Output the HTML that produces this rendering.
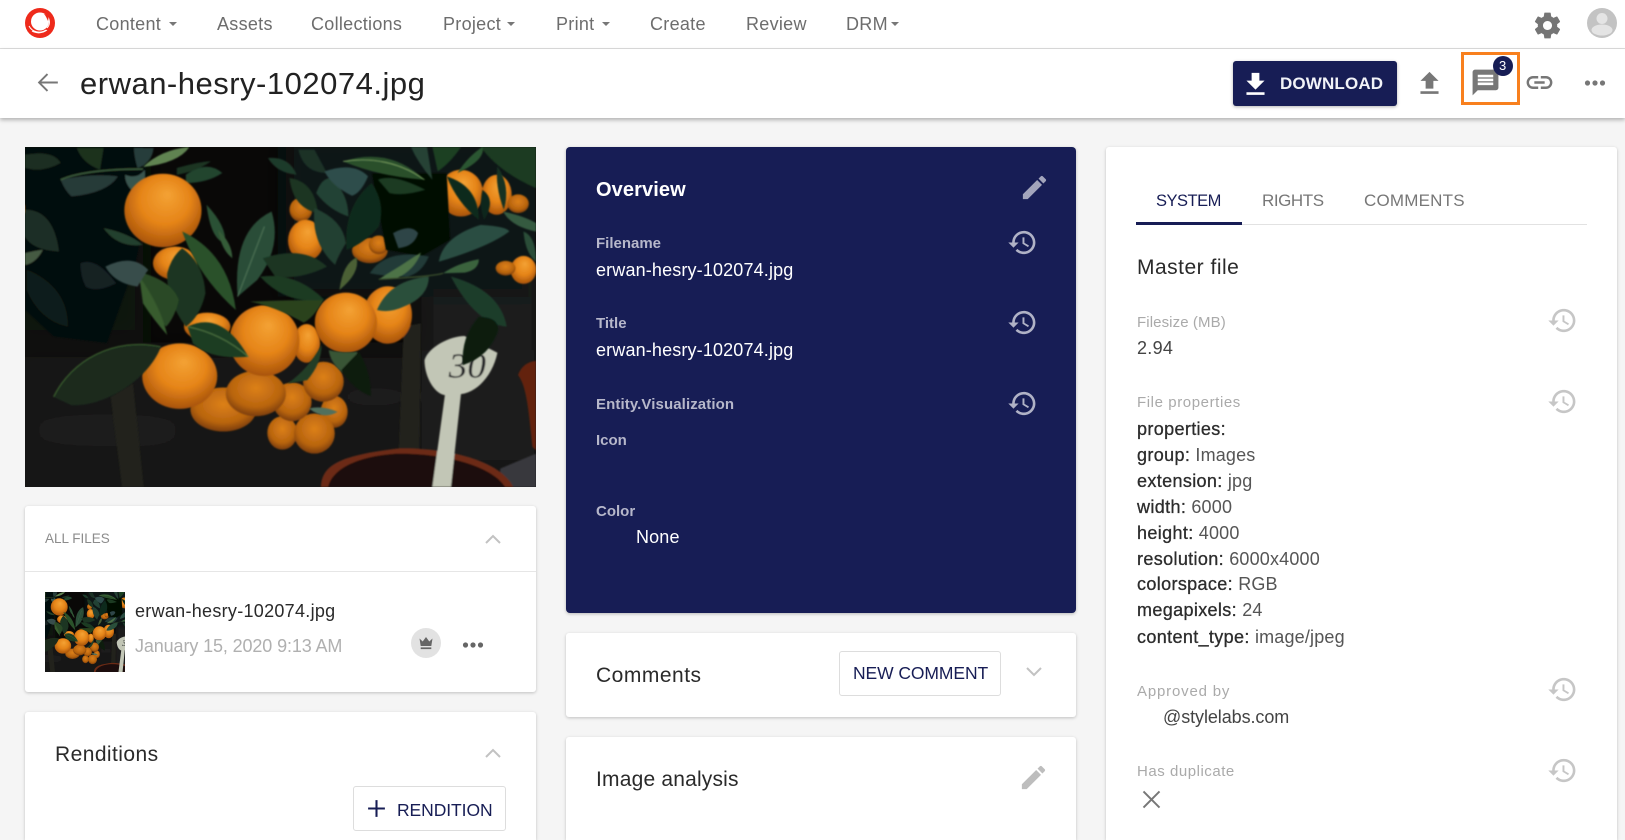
<!DOCTYPE html>
<html lang="en">
<head>
<meta charset="utf-8">
<title>erwan-hesry-102074.jpg</title>
<style>
html,body{margin:0;padding:0;width:1625px;height:840px;overflow:hidden;background:#f5f5f5;font-family:"Liberation Sans",Arial,sans-serif;color:#333}
#page{position:relative;width:1625px;height:840px;overflow:hidden;background:#f5f5f5}
.box{position:absolute;box-sizing:border-box}
.card{background:#fff;border-radius:3px;box-shadow:0 1px 3px rgba(0,0,0,.22)}
.open{border-radius:3px 3px 0 0}
.t{position:absolute;white-space:nowrap;line-height:24px;letter-spacing:.016em}
.ic{position:absolute;width:31px;height:31px;display:block}
.nav{font-size:18px;color:#6d6d6d;top:12px}
.car{position:absolute;top:22px;width:0;height:0;border-left:4.5px solid transparent;border-right:4.5px solid transparent;border-top:4.5px solid #777}
.lab{font-size:15px;font-weight:700;color:#b6b7ca;left:596px}
.val{font-size:18px;color:#fff;left:596px;letter-spacing:.15px}
.glab{font-size:15px;color:#aaa;left:1137px;letter-spacing:.03em}
.kv{left:1137px;font-size:18px;color:#555;letter-spacing:.01em}
.kv b{font-weight:400;color:#2c2c2c;-webkit-text-stroke:.3px #2c2c2c;letter-spacing:.02em}
.h1{font-size:21px;color:#2a2a2a;letter-spacing:.5px}
.btn{background:#fff;border:1px solid #ddd;border-radius:3px}
.navy{color:#171d55}
</style>
</head>
<body>
<div id="page">

<!-- top nav -->
<div class="box" style="left:0;top:0;width:1625px;height:49px;background:#fff;border-bottom:1px solid #dedede"></div>
<svg class="ic" style="left:24px;top:7px;width:32px;height:32px" viewBox="0 0 32 32">
  <circle cx="16" cy="16" r="15" fill="#ee2a1b"/>
  <circle cx="16" cy="14.500" r="9" fill="#fff"/>
  <path d="M5 19c3 6 11 8 17 4M8 24c5 3 11 2 15-1M24 10c2 4 2 8-1 11M21 18c-1 2-3 3-5 3" fill="none" stroke="#fff" stroke-width="1"/>
  <path d="M20 7l5 1-1 6c-1-2-2-5-4-7z" fill="#ee2a1b"/>
</svg>

<span class="t nav" style="left:96px">Content</span><i class="car" style="left:169px"></i>
<span class="t nav" style="left:217px">Assets</span>
<span class="t nav" style="left:311px">Collections</span>
<span class="t nav" style="left:443px">Project</span><i class="car" style="left:507px"></i>
<span class="t nav" style="left:556px">Print</span><i class="car" style="left:602px"></i>
<span class="t nav" style="left:650px">Create</span>
<span class="t nav" style="left:746px">Review</span>
<span class="t nav" style="left:846px">DRM</span><i class="car" style="left:891px"></i>

<svg class="ic" style="left:1532px;top:10px" viewBox="0 0 24 24" fill="#757575"><path d="M19.43 12.98c.04-.32.07-.64.07-.98s-.03-.66-.07-.98l2.11-1.65c.19-.15.24-.42.12-.64l-2-3.46c-.12-.22-.39-.3-.61-.22l-2.49 1c-.52-.4-1.08-.73-1.69-.98l-.38-2.65C14.46 2.18 14.25 2 14 2h-4c-.25 0-.46.18-.49.42l-.38 2.65c-.61.25-1.17.59-1.69.98l-2.49-1c-.23-.09-.49 0-.61.22l-2 3.46c-.13.22-.07.49.12.64l2.11 1.65c-.04.32-.07.65-.07.98s.03.66.07.98l-2.11 1.65c-.19.15-.24.42-.12.64l2 3.46c.12.22.39.3.61.22l2.49-1c.52.4 1.08.73 1.69.98l.38 2.65c.03.24.24.42.49.42h4c.25 0 .46-.18.49-.42l.38-2.65c.61-.25 1.17-.59 1.69-.98l2.49 1c.23.09.49 0 .61-.22l2-3.46c.12-.22.07-.49-.12-.64l-2.11-1.65zM12 15.5c-1.93 0-3.5-1.57-3.5-3.5s1.57-3.5 3.5-3.5 3.5 1.57 3.5 3.5-1.57 3.5-3.5 3.5z"/></svg>
<svg class="ic" style="left:1587px;top:8px;width:30px;height:30px" viewBox="0 0 30 30">
  <defs><clipPath id="av"><circle cx="15" cy="15" r="15"/></clipPath></defs>
  <circle cx="15" cy="15" r="15" fill="#c3c3c3"/>
  <g clip-path="url(#av)" fill="#e4e4e4"><circle cx="15" cy="10.500" r="5.500"/><ellipse cx="15" cy="22" rx="10.500" ry="5.500"/></g>
</svg>

<!-- sub header -->
<div class="box" style="left:0;top:49px;width:1625px;height:69px;background:#fff;box-shadow:0 2px 4px rgba(0,0,0,.28)"></div>
<svg class="ic" style="left:32px;top:67px" viewBox="0 0 24 24"><path d="M20 12H5.500M12 5.500L5.500 12l6.500 6.500" fill="none" stroke="#777" stroke-width="1.500"/></svg>
<span class="t" style="left:80px;top:66px;font-size:31px;line-height:36px;color:#222;letter-spacing:.5px">erwan-hesry-102074.jpg</span>

<div class="box" style="left:1233px;top:61px;width:164px;height:45px;background:#171d55;border-radius:3px;box-shadow:0 1px 3px rgba(0,0,0,.3)"></div>
<svg class="ic" style="left:1240px;top:69px" viewBox="0 0 24 24" fill="#fff"><path d="M19 9h-4V3H9v6H5l7 7 7-7zM5 18v2h14v-2H5z"/></svg>
<span class="t" style="left:1280px;top:72px;font-size:17px;font-weight:700;color:#f1f2f8;letter-spacing:.15px">DOWNLOAD</span>

<svg class="ic" style="left:1414px;top:68px" viewBox="0 0 24 24" fill="#777"><path d="M9 16h6v-6h4l-7-7-7 7h4zm-4 2h14v2H5z"/></svg>

<div class="box" style="left:1461px;top:52px;width:59px;height:53px;border:3px solid #f8801e"></div>
<svg class="ic" style="left:1470px;top:67px" viewBox="0 0 24 24" fill="#777"><path d="M20 2H4c-1.1 0-2 .9-2 2v18l4-4h14c1.1 0 2-.9 2-2V4c0-1.1-.9-2-2-2zm-2 12H6v-2h12v2zm0-3H6V9h12v2zm0-3H6V6h12v2z"/></svg>
<div class="box" style="left:1493px;top:56px;width:20px;height:20px;border-radius:50%;background:#171d55"></div>
<span class="t" style="left:1499px;top:54px;font-size:13px;color:#fff">3</span>

<svg class="ic" style="left:1524px;top:67px" viewBox="0 0 24 24" fill="#777"><path d="M3.9 12c0-1.71 1.39-3.1 3.1-3.1h4V7H7c-2.76 0-5 2.24-5 5s2.24 5 5 5h4v-1.9H7c-1.71 0-3.1-1.39-3.1-3.1zM8 13h8v-2H8v2zm9-6h-4v1.9h4c1.71 0 3.1 1.39 3.1 3.1s-1.39 3.1-3.1 3.1h-4V17h4c2.76 0 5-2.24 5-5s-2.24-5-5-5z"/></svg>
<svg class="ic" style="left:1584px;top:78px;width:22px;height:10px" viewBox="0 0 22 10" fill="#777"><circle cx="3.5" cy="5" r="2.6"/><circle cx="11" cy="5" r="2.6"/><circle cx="18.5" cy="5" r="2.6"/></svg>

<!-- main photo -->
<svg class="box" style="left:25px;top:147px;width:511px;height:340px;display:block" viewBox="70 52 1430 1018" preserveAspectRatio="none">
<defs>
  <radialGradient id="o" cx=".5" cy=".42" r=".6" fx=".56" fy=".28">
    <stop offset="0" stop-color="#f4a234"/><stop offset=".55" stop-color="#e58418"/><stop offset="1" stop-color="#a4500a"/>
  </radialGradient>
  <radialGradient id="od" cx=".5" cy=".38" r=".65">
    <stop offset="0" stop-color="#dc8018"/><stop offset=".65" stop-color="#b8640f"/><stop offset="1" stop-color="#723708"/>
  </radialGradient>
  <filter id="bl" x="-2%" y="-2%" width="104%" height="104%"><feGaussianBlur stdDeviation="2"/></filter>
  <filter id="lv" x="-2%" y="-2%" width="104%" height="104%">
    <feGaussianBlur stdDeviation="2"/>
    <feComponentTransfer><feFuncR type="linear" slope=".6"/><feFuncG type="linear" slope=".66"/><feFuncB type="linear" slope=".62"/></feComponentTransfer>
  </filter>
  <filter id="bl2" x="-20%" y="-20%" width="140%" height="140%"><feGaussianBlur stdDeviation="34"/></filter>
  <clipPath id="cp"><rect x="70" y="52" width="1430" height="1018"/></clipPath>
</defs>
<g id="photo" clip-path="url(#cp)">
<rect x="70" y="52" width="1430" height="1018" fill="#090807"/>
<g filter="url(#bl2)">
  <rect x="40" y="660" width="1490" height="440" fill="#151314"/>
  <rect x="1180" y="470" width="340" height="520" fill="#1c1a1c"/>
  <ellipse cx="300" cy="900" rx="220" ry="26" fill="#222020"/>
  <ellipse cx="560" cy="1010" rx="190" ry="22" fill="#1f1d1e"/>
  <ellipse cx="1050" cy="800" rx="120" ry="30" fill="#1f1c1d"/>
  <rect x="1360" y="410" width="170" height="50" fill="#5c4440"/>
  <rect x="40" y="60" width="360" height="560" fill="#0e1611"/>
  <rect x="800" y="30" width="720" height="470" fill="#0d1812"/>
</g>
<g filter="url(#bl)">
  <path d="M1400 1015L1500 970V1070H1400Z" fill="#38383d"/>
  <path d="M310 800L372 760 402 1070H342Z" fill="#22241a"/>
  <path d="M1130 590L1178 580 1172 1070H1112Z" fill="#22211a"/>
  <path d="M1450 735C1460 705 1480 695 1500 692V960L1490 950C1480 850 1475 770 1450 735Z" fill="#64220f"/>
  <path d="M898 1070C900 1000 960 975 1110 955 1250 950 1400 990 1436 1070Z" fill="#6c2b14"/>
  <path d="M918 1070C930 1015 1000 978 1110 970 1240 968 1375 1005 1414 1070Z" fill="#1a0e0b"/>
  <path d="M1210 1070L1245 795C1215 790 1188 740 1188 690 1200 650 1260 618 1300 618L1392 668C1380 730 1340 785 1290 792L1262 1070Z" fill="#c2c6b6"/>
  <text x="1256" y="742" font-family="Liberation Serif,serif" font-style="italic" font-size="104" fill="#222426">30</text>

  <!-- back fruit -->
  <ellipse cx="95" cy="238" rx="30" ry="20" fill="url(#od)"/>
  <ellipse cx="268" cy="330" rx="16" ry="12" fill="url(#od)"/>
  <ellipse cx="842" cy="240" rx="32" ry="36" fill="url(#od)"/>
  <ellipse cx="856" cy="332" rx="50" ry="62" fill="url(#o)"/>
  <ellipse cx="1035" cy="362" rx="50" ry="38" fill="url(#od)"/>
  <ellipse cx="1060" cy="345" rx="28" ry="28" fill="url(#od)"/>
  <ellipse cx="1290" cy="190" rx="62" ry="70" fill="url(#o)"/>
  <ellipse cx="1390" cy="195" rx="42" ry="60" fill="url(#o)"/>
  <ellipse cx="1450" cy="222" rx="30" ry="28" fill="url(#od)"/>
  <ellipse cx="1465" cy="420" rx="36" ry="42" fill="url(#o)"/>
  <ellipse cx="1415" cy="415" rx="28" ry="22" fill="url(#od)"/>
  <ellipse cx="490" cy="400" rx="62" ry="50" fill="url(#o)"/>
  <ellipse cx="580" cy="590" rx="65" ry="42" fill="url(#o)"/>
  <ellipse cx="625" cy="838" rx="92" ry="66" fill="url(#od)"/>
  <ellipse cx="790" cy="908" rx="42" ry="50" fill="url(#od)"/>
  <ellipse cx="935" cy="845" rx="38" ry="48" fill="url(#od)"/>
  <ellipse cx="880" cy="910" rx="57" ry="60" fill="url(#od)"/>
  <ellipse cx="818" cy="815" rx="54" ry="58" fill="url(#od)"/>
  <ellipse cx="905" cy="755" rx="57" ry="60" fill="url(#od)"/>
  <ellipse cx="858" cy="640" rx="38" ry="58" fill="url(#o)"/>
  <ellipse cx="1085" cy="555" rx="68" ry="86" fill="url(#o)"/>
</g>

<g filter="url(#lv)">
  <!-- back dark foliage -->
  <path d="M70 52H400L420 200 380 400 300 640 150 620 70 540Z" fill="#0f1712"/>
  <path d="M1040 130L1250 130 1260 330 1180 380 1080 360Z" fill="#0c1710"/>
  <path d="M70 240Q150 240 165 365Q90 360 70 320Z" fill="#2a3e36"/>
  <path d="M170 150Q260 130 330 140Q300 190 200 200Q180 180 170 150Z" fill="#36494a"/>
  <path d="M75 420Q190 470 190 590Q110 570 75 480Z" fill="#1e2a28"/>
  <path d="M290 295Q360 310 400 345Q330 355 290 295Z" fill="#32503c"/>
  <path d="M225 400Q270 380 325 460Q270 490 240 470Q225 440 225 400Z" fill="#222f33"/>
  <path d="M70 370Q110 360 120 360Q100 400 70 405Z" fill="#5a6e56"/>
  <path d="M70 75Q150 60 170 100Q120 130 70 115Z" fill="#253a2e"/>
  <path d="M375 55H430Q425 100 385 115Q375 80 375 55Z" fill="#364e4e"/>
  <path d="M215 55H290L280 120Q230 100 215 55Z" fill="#28402c"/>
  <path d="M170 150Q240 118 400 118" fill="none" stroke="#4c6c4c" stroke-width="5"/>
  <path d="M350 135Q385 150 405 120Q410 175 380 190Q350 170 350 135Z" fill="#4b6864"/>
  <path d="M520 135Q580 90 622 130Q580 160 520 160Z" fill="#2f543e"/>
  <path d="M495 115Q560 95 590 95Q550 125 495 135Z" fill="#264532"/>
  <path d="M810 145Q880 155 890 250Q820 235 810 145Z" fill="#25422f"/>
  <path d="M750 85Q810 80 830 135Q775 130 750 85Z" fill="#2c4839"/>
  <path d="M835 60H880Q905 110 915 130Q850 130 835 60Z" fill="#253f36"/>
</g>

<g filter="url(#bl)">
  <!-- main fruit -->
  <ellipse cx="456" cy="242" rx="108" ry="110" fill="url(#o)"/>
  <ellipse cx="716" cy="790" rx="84" ry="68" fill="url(#od)"/>
  <ellipse cx="503" cy="738" rx="105" ry="98" fill="url(#o)"/>
  <ellipse cx="740" cy="632" rx="98" ry="106" fill="url(#o)"/>
  <ellipse cx="968" cy="578" rx="87" ry="90" fill="url(#o)"/>
</g>

<g filter="url(#lv)">
  <!-- leaves -->
  <path d="M150 800C200 690 320 620 450 650 420 740 300 830 200 825Z" fill="#263829"/>
  <path d="M150 800C200 690 320 620 450 650" fill="none" stroke="#50763e" stroke-width="3"/>
  <path d="M400 112Q450 60 530 52Q500 100 400 112Z" fill="#7a9f68"/>
  <path d="M510 355Q570 400 575 490 560 560 520 590 465 510 468 430 480 380 510 355Z" fill="#26442e"/>
  <path d="M385 425Q480 450 500 510 490 560 465 590 400 520 385 425Z" fill="#3a5c36"/>
  <path d="M390 440Q450 530 468 615 430 570 400 520Z" fill="#4a703e"/>
  <path d="M510 305Q640 370 660 540 555 440 510 305Z" fill="#386438"/>
  <path d="M578 225Q635 290 630 340 590 330 578 225Z" fill="#3a6444"/>
  <path d="M610 300Q650 340 650 385 620 360 610 300Z" fill="#46704a"/>
  <path d="M665 500Q650 300 760 245 790 350 720 450Z" fill="#386048"/>
  <path d="M665 500L740 290" stroke="#64886c" stroke-width="3" fill="none"/>
  <path d="M295 410Q370 370 415 420 400 440 385 470 320 460 295 410Z" fill="#4b5f60"/>
  <path d="M525 590Q620 540 695 680 590 690 540 640Z" fill="#294e30"/>
  <path d="M525 590Q620 610 695 680" stroke="#669054" stroke-width="3" fill="none"/>
  <path d="M735 385Q850 345 915 410 840 450 770 440Z" fill="#274532"/>
  <path d="M728 440Q830 425 908 510 800 525 728 440Z" fill="#264831"/>
  <path d="M700 515Q800 510 905 510 880 560 850 578 770 530 700 515Z" fill="#39522c"/>
  <path d="M880 235Q960 270 968 340 945 380 938 405 870 340 880 235Z" fill="#30503f"/>
  <path d="M885 190Q900 145 925 145 975 190 975 260 920 240 885 190Z" fill="#325344"/>
  <path d="M970 360Q960 230 1040 160 1080 220 1060 290 1020 340 970 360Z" fill="#1e3826"/>
  <path d="M960 95Q1090 50 1188 150 1060 140 960 95Z" fill="#38623a"/>
  <path d="M960 95Q1090 75 1188 150" stroke="#a0c87c" stroke-width="2" fill="none"/>
  <path d="M908 125Q990 95 1030 140 1010 190 985 198 930 170 908 125Z" fill="#3e5f60"/>
  <path d="M1058 150Q1100 130 1190 180 1130 200 1090 190Z" fill="#284c32"/>
  <path d="M1100 310Q1150 280 1170 310 1160 350 1115 355Z" fill="#3e555c"/>
  <path d="M1035 430Q1080 355 1200 380 1180 430 1140 440 1080 440 1035 430Z" fill="#2e4c4a"/>
  <path d="M1060 448Q1120 410 1178 368 1160 420 1110 445Z" fill="#658c5c"/>
  <path d="M1055 540Q1090 450 1200 440 1200 500 1130 530 1090 550 1055 540Z" fill="#3a624e"/>
  <path d="M950 480Q960 400 998 383 1008 430 950 480Z" fill="#607646"/>
  <path d="M920 660Q960 670 1000 665 990 720 960 728 925 700 920 660Z" fill="#4c6846"/>
  <path d="M955 720Q990 680 1005 665 1040 730 1038 798 990 780 955 720Z" fill="#182618"/>
  <path d="M805 760Q860 720 900 645 900 700 860 750Z" fill="#304e34"/>
  <path d="M865 835Q900 825 945 845 905 870 865 835Z" fill="#688876"/>
  <path d="M1240 430Q1280 400 1340 388 1340 420 1300 428Z" fill="#4d7950"/>
  <path d="M1262 440Q1400 480 1418 590 1330 580 1262 440Z" fill="#294d3a"/>
  <path d="M1228 395Q1240 320 1345 285 1420 290 1425 305 1370 350 1230 395Z" fill="#386054"/>
  <path d="M1408 245Q1470 260 1500 280V305Q1430 290 1408 245Z" fill="#466e52"/>
  <path d="M1345 52H1500V175Q1400 130 1345 52Z" fill="#264c2e"/>
  <path d="M1280 130Q1310 80 1350 52 1360 90 1280 130Z" fill="#3b6a40"/>
  <path d="M1150 52H1195L1210 150Q1170 100 1150 52Z" fill="#345246"/>
  <path d="M1210 52H1290Q1260 100 1225 125Z" fill="#285030"/>
  <path d="M1250 140Q1340 170 1340 270 1280 220 1250 140Z" fill="#1c3828"/>
  <path d="M1350 180Q1390 210 1355 270 1340 230 1350 180Z" fill="#1c3226"/>
  <path d="M1392 110Q1430 170 1410 240 1385 170 1392 110Z" fill="#204030"/>
  <path d="M1465 305Q1500 320 1500 395 1470 370 1465 305Z" fill="#386048"/>
  <path d="M1295 705Q1290 620 1340 560 1395 560 1395 600 1370 680 1295 705Z" fill="#14291e"/>
  <path d="M1060 448Q1210 440 1240 430" stroke="#4c603a" stroke-width="4" fill="none"/>
</g>
</g>
</svg>

<!-- all files -->
<div class="box card" style="left:25px;top:506px;width:511px;height:186px"></div>
<div class="box" style="left:25px;top:571px;width:511px;height:1px;background:#e6e6e6"></div>
<span class="t" style="left:45px;top:527px;font-size:13.500px;color:#8c8c8c;letter-spacing:0">ALL FILES</span>
<svg class="ic" style="left:484px;top:533px;width:18px;height:12px" viewBox="0 0 18 12"><path d="M2 10L9 3l7 7" fill="none" stroke="#c2c2c2" stroke-width="2"/></svg>
<svg class="box" style="left:45px;top:592px;width:80px;height:80px;display:block" viewBox="275 52 1018 1018"><use href="#photo"/></svg>
<span class="t" style="left:135px;top:599px;font-size:18px;color:#2a2a2a">erwan-hesry-102074.jpg</span>
<span class="t" style="left:135px;top:634px;font-size:18px;color:#b0b0b0;letter-spacing:-.12px">January 15, 2020 9:13 AM</span>
<div class="box" style="left:411px;top:628px;width:30px;height:30px;border-radius:50%;background:#e2e2e2"></div>
<svg class="ic" style="left:418px;top:635px;width:16px;height:16px" viewBox="0 0 16 16" fill="#666"><path d="M1.5 3.500l3.200 3L8 2l3.300 4.500 3.200-3-1.200 7.500H2.700z"/><rect x="2.700" y="12.400" width="10.600" height="1.700"/></svg>
<svg class="ic" style="left:462px;top:640px;width:22px;height:10px" viewBox="0 0 22 10" fill="#666"><circle cx="3.500" cy="5" r="2.600"/><circle cx="11" cy="5" r="2.600"/><circle cx="18.500" cy="5" r="2.600"/></svg>

<!-- renditions -->
<div class="box card open" style="left:25px;top:712px;width:511px;height:128px"></div>
<span class="t h1" style="left:55px;top:743px;letter-spacing:.43px">Renditions</span>
<svg class="ic" style="left:484px;top:747px;width:18px;height:12px" viewBox="0 0 18 12"><path d="M2 10L9 3l7 7" fill="none" stroke="#c2c2c2" stroke-width="2"/></svg>
<div class="box btn" style="left:353px;top:786px;width:153px;height:45px"></div>
<svg class="ic" style="left:361px;top:793px" viewBox="0 0 24 24" fill="#171d55"><path d="M18.500 12.800h-5.700v5.700h-1.600v-5.700H5.500v-1.600h5.700V5.500h1.600v5.700h5.700z"/></svg>
<span class="t navy" style="left:397px;top:798px;font-size:17.500px;letter-spacing:-.08px">RENDITION</span>

<!-- overview -->
<div class="box" style="left:566px;top:147px;width:510px;height:466px;background:#171d55;border-radius:4px;box-shadow:0 1px 3px rgba(0,0,0,.25)"></div>
<span class="t" style="left:596px;top:178px;font-size:20px;font-weight:700;color:#fff;letter-spacing:.1px">Overview</span>
<svg class="ic" style="left:1019px;top:172px" viewBox="0 0 24 24" fill="#a3a5bc"><path d="M3 17.250V21h3.750L17.810 9.940l-3.750-3.750L3 17.250zM20.710 7.040c.39-.39.39-1.020 0-1.410l-2.340-2.340c-.39-.39-1.020-.39-1.410 0l-1.830 1.830 3.750 3.750 1.830-1.830z"/></svg>

<span class="t lab" style="top:232px;letter-spacing:0">Filename</span>
<span class="t val" style="top:258px">erwan-hesry-102074.jpg</span>
<svg class="ic" style="left:1007px;top:227px" viewBox="0 0 24 24" fill="#b0b2c6"><path d="M13 3c-4.970 0-9 4.030-9 9H1l3.890 3.890.07.140L9 12H6c0-3.870 3.130-7 7-7s7 3.130 7 7-3.130 7-7 7c-1.930 0-3.680-.79-4.940-2.060l-1.420 1.420C8.270 19.990 10.510 21 13 21c4.970 0 9-4.030 9-9s-4.030-9-9-9zm-1 5v5l4.280 2.540.72-1.210-3.500-2.080V8H12z"/></svg>

<span class="t lab" style="top:312px;letter-spacing:0">Title</span>
<span class="t val" style="top:338px">erwan-hesry-102074.jpg</span>
<svg class="ic" style="left:1007px;top:307px" viewBox="0 0 24 24" fill="#b0b2c6"><path d="M13 3c-4.970 0-9 4.030-9 9H1l3.890 3.890.07.140L9 12H6c0-3.870 3.130-7 7-7s7 3.130 7 7-3.130 7-7 7c-1.930 0-3.680-.79-4.940-2.060l-1.420 1.420C8.270 19.990 10.510 21 13 21c4.970 0 9-4.030 9-9s-4.030-9-9-9zm-1 5v5l4.280 2.540.72-1.210-3.500-2.080V8H12z"/></svg>

<span class="t lab" style="top:393px;letter-spacing:.1px">Entity.Visualization</span>
<svg class="ic" style="left:1007px;top:388px" viewBox="0 0 24 24" fill="#b0b2c6"><path d="M13 3c-4.970 0-9 4.030-9 9H1l3.890 3.890.07.140L9 12H6c0-3.870 3.130-7 7-7s7 3.130 7 7-3.130 7-7 7c-1.930 0-3.680-.79-4.940-2.060l-1.420 1.420C8.270 19.990 10.510 21 13 21c4.970 0 9-4.030 9-9s-4.030-9-9-9zm-1 5v5l4.280 2.540.72-1.210-3.500-2.080V8H12z"/></svg>

<span class="t lab" style="top:429px;letter-spacing:0">Icon</span>
<span class="t lab" style="top:500px;letter-spacing:0">Color</span>
<span class="t val" style="left:636px;top:525px">None</span>

<!-- comments -->
<div class="box card" style="left:566px;top:633px;width:510px;height:84px"></div>
<span class="t h1" style="left:596px;top:664px">Comments</span>
<div class="box btn" style="left:839px;top:651px;width:162px;height:45px"></div>
<span class="t navy" style="left:853px;top:661px;font-size:17.500px;letter-spacing:-.09px">NEW COMMENT</span>
<svg class="ic" style="left:1025px;top:666px;width:18px;height:12px" viewBox="0 0 18 12"><path d="M2 2l7 7 7-7" fill="none" stroke="#c2c2c2" stroke-width="2"/></svg>

<!-- image analysis -->
<div class="box card open" style="left:566px;top:737px;width:510px;height:103px"></div>
<span class="t h1" style="left:596px;top:768px;letter-spacing:.19px">Image analysis</span>
<svg class="ic" style="left:1018px;top:762px" viewBox="0 0 24 24" fill="#bdbdbd"><path d="M3 17.250V21h3.750L17.810 9.940l-3.750-3.750L3 17.250zM20.710 7.040c.39-.39.39-1.020 0-1.410l-2.340-2.340c-.39-.39-1.020-.39-1.410 0l-1.830 1.830 3.750 3.750 1.830-1.830z"/></svg>

<!-- right panel -->
<div class="box card open" style="left:1106px;top:147px;width:511px;height:693px"></div>
<span class="t navy" style="left:1156px;top:189px;font-size:16.500px;letter-spacing:-.5px">SYSTEM</span>
<span class="t" style="left:1262px;top:189px;font-size:17px;color:#777;letter-spacing:-.43px">RIGHTS</span>
<span class="t" style="left:1364px;top:189px;font-size:17px;color:#777;letter-spacing:.2px">COMMENTS</span>
<div class="box" style="left:1136px;top:224px;width:451px;height:1px;background:#e2e2e2"></div>
<div class="box" style="left:1136px;top:222px;width:106px;height:3px;background:#171d55"></div>

<span class="t h1" style="left:1137px;top:256px">Master file</span>

<span class="t glab" style="top:311px;letter-spacing:.1px">Filesize (MB)</span>
<span class="t" style="left:1137px;top:336px;font-size:18px;color:#444">2.94</span>
<svg class="ic" style="left:1547px;top:305px" viewBox="0 0 24 24" fill="#c6c6c6"><path d="M13 3c-4.970 0-9 4.030-9 9H1l3.890 3.890.07.140L9 12H6c0-3.870 3.130-7 7-7s7 3.130 7 7-3.130 7-7 7c-1.930 0-3.680-.79-4.940-2.060l-1.420 1.420C8.270 19.990 10.510 21 13 21c4.970 0 9-4.030 9-9s-4.030-9-9-9zm-1 5v5l4.280 2.540.72-1.210-3.500-2.080V8H12z"/></svg>

<span class="t glab" style="top:391px;letter-spacing:.59px">File properties</span>
<svg class="ic" style="left:1547px;top:386px" viewBox="0 0 24 24" fill="#c6c6c6"><path d="M13 3c-4.970 0-9 4.030-9 9H1l3.890 3.890.07.140L9 12H6c0-3.870 3.130-7 7-7s7 3.130 7 7-3.130 7-7 7c-1.930 0-3.680-.79-4.940-2.060l-1.420 1.420C8.270 19.990 10.510 21 13 21c4.970 0 9-4.030 9-9s-4.030-9-9-9zm-1 5v5l4.280 2.540.72-1.210-3.500-2.080V8H12z"/></svg>

<span class="t kv" style="top:417px"><b>properties:</b></span>
<span class="t kv" style="top:443px"><b>group:</b> Images</span>
<span class="t kv" style="top:469px"><b>extension:</b> jpg</span>
<span class="t kv" style="top:495px"><b>width:</b> 6000</span>
<span class="t kv" style="top:521px"><b>height:</b> 4000</span>
<span class="t kv" style="top:547px"><b>resolution:</b> 6000x4000</span>
<span class="t kv" style="top:572px"><b>colorspace:</b> RGB</span>
<span class="t kv" style="top:598px"><b>megapixels:</b> 24</span>
<span class="t kv" style="top:625px"><b>content_type:</b> image/jpeg</span>

<span class="t glab" style="top:680px;letter-spacing:.82px">Approved by</span>
<span class="t" style="left:1163px;top:705px;font-size:18px;color:#444;letter-spacing:-.08px">@stylelabs.com</span>
<svg class="ic" style="left:1547px;top:674px" viewBox="0 0 24 24" fill="#c6c6c6"><path d="M13 3c-4.970 0-9 4.030-9 9H1l3.890 3.890.07.140L9 12H6c0-3.870 3.130-7 7-7s7 3.130 7 7-3.130 7-7 7c-1.930 0-3.680-.79-4.940-2.060l-1.420 1.420C8.270 19.990 10.510 21 13 21c4.970 0 9-4.030 9-9s-4.030-9-9-9zm-1 5v5l4.280 2.540.72-1.210-3.500-2.080V8H12z"/></svg>

<span class="t glab" style="top:760px;letter-spacing:.53px">Has duplicate</span>
<svg class="ic" style="left:1136px;top:784px" viewBox="0 0 24 24"><path d="M5.800 5.800L18.200 18.200M18.200 5.800L5.800 18.200" fill="none" stroke="#777" stroke-width="1.500"/></svg>
<svg class="ic" style="left:1547px;top:755px" viewBox="0 0 24 24" fill="#c6c6c6"><path d="M13 3c-4.970 0-9 4.030-9 9H1l3.890 3.890.07.140L9 12H6c0-3.870 3.130-7 7-7s7 3.130 7 7-3.130 7-7 7c-1.930 0-3.680-.79-4.940-2.060l-1.420 1.420C8.270 19.990 10.510 21 13 21c4.970 0 9-4.030 9-9s-4.030-9-9-9zm-1 5v5l4.280 2.540.72-1.210-3.500-2.080V8H12z"/></svg>

</div>
</body>
</html>
